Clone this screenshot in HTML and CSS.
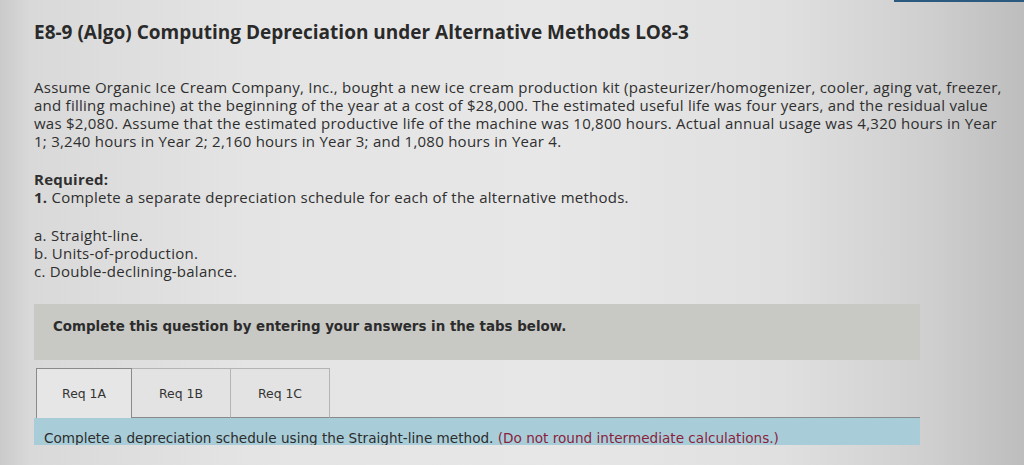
FILE: index.html
```html
<!DOCTYPE html>
<html>
<head>
<meta charset="utf-8">
<link rel="stylesheet" href="styles.css">
</head>
<body>
<div class="topbar"></div>
<main class="page">
  <h1 class="title">E8-9 (Algo) Computing Depreciation under Alternative Methods LO8-3</h1>
  <p class="intro">Assume Organic Ice Cream Company, Inc., bought a new ice cream production kit (pasteurizer/homogenizer, cooler, aging vat, freezer,<br>and filling machine) at the beginning of the year at a cost of $28,000. The estimated useful life was four years, and the residual value<br>was $2,080. Assume that the estimated productive life of the machine was 10,800 hours. Actual annual usage was 4,320 hours in Year<br>1; 3,240 hours in Year 2; 2,160 hours in Year 3; and 1,080 hours in Year 4.</p>
  <p class="required"><strong>Required:</strong><br><strong>1.</strong> Complete a separate depreciation schedule for each of the alternative methods.</p>
  <ul class="methods">
    <li>a. Straight-line.</li>
    <li>b. Units-of-production.</li>
    <li>c. Double-declining-balance.</li>
  </ul>
  <section class="panel">
    <div class="notice">Complete this question by entering your answers in the tabs below.</div>
    <div class="tabs">
      <div class="tab active">Req 1A</div>
      <div class="tab">Req 1B</div>
      <div class="tab">Req 1C</div>
      <div class="tab-rest"></div>
    </div>
    <div class="instruction">Complete a depreciation schedule using the Straight-line method. <span class="warn">(Do not round intermediate calculations.)</span></div>
  </section>
</main>
</body>
</html>
```
FILE: styles.css
```css
html, body {
  margin: 0;
  padding: 0;
  height: 465px;
  overflow: hidden;
}
body {
  background: linear-gradient(to right, #cacaca 0px, #d9d9d9 30px, #e4e4e4 250px, #e7e7e7 550px, #e0e0e0 780px, #cfcfcf 930px, #bdbdbd 1024px);
  font-family: "Open Sans", "Lato", sans-serif;
  color: #2f2f2f;
  position: relative;
}
.topbar {
  position: absolute;
  top: 0;
  right: 0;
  width: 130px;
  height: 2px;
  background: #2b5a7e;
}
.page {
  padding: 20px 0 0 34px;
}
.title {
  margin: 0;
  font-size: 19px;
  line-height: 24px;
  font-weight: 700;
  color: #2a2a2a;
}
.intro, .required, .methods {
  font-size: 15px;
  line-height: 18px;
  letter-spacing: 0.25px;
}
.intro {
  margin: 34px 0 0 0;
  white-space: nowrap;
}
.required {
  margin: 20px 0 0 0;
}
.methods {
  list-style: none;
  margin: 20px 0 0 0;
  padding: 0;
}
.panel {
  width: 886px;
  margin-top: 24px;
  font-family: "DejaVu Sans", Verdana, sans-serif;
}
.notice {
  height: 56px;
  box-sizing: border-box;
  padding: 15px 0 0 19px;
  background: #c8c8c4;
  font-weight: 700;
  font-size: 13.4px;
  color: #2c2c2c;
}
.tabs {
  display: flex;
  margin-top: 8px;
  padding-left: 2px;
}
.tab {
  width: 99px;
  height: 50px;
  box-sizing: border-box;
  display: flex;
  align-items: center;
  justify-content: center;
  font-size: 12.4px;
  color: #333;
  border: 1px solid #b4b4b4;
  border-left: none;
  border-bottom: 1px solid #8a8a8a;
  background: #e3e3e3;
}
.tab.active {
  width: 96px;
  border: 1px solid #8a8a8a;
  border-bottom: none;
  background: #e6e6e6;
}
.tab-rest {
  flex: 1;
  border-bottom: 1px solid #8a8a8a;
}
.instruction {
  height: 27px;
  overflow: hidden;
  box-sizing: border-box;
  padding: 12px 0 0 10px;
  background: #a9cdd8;
  font-size: 13.6px;
  line-height: 16px;
  color: #2c2c2c;
}
.warn {
  color: #8a1f3c;
}
```
